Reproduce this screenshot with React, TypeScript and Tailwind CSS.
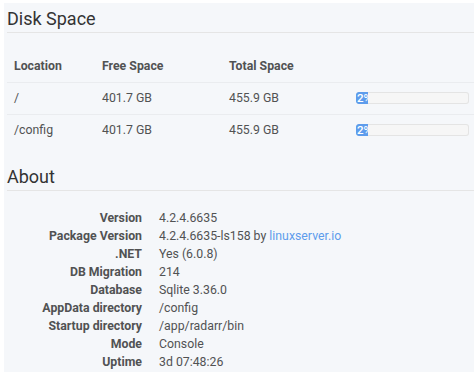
import React from "react";

type DiskRow = { location: string; free: string; total: string; percent: number };

const DISKS: DiskRow[] = [
  { location: "/", free: "401.7 GB", total: "455.9 GB", percent: 2 },
  { location: "/config", free: "401.7 GB", total: "455.9 GB", percent: 2 },
];

const ABOUT: { label: string; value: React.ReactNode }[] = [
  { label: "Version", value: "4.2.4.6635" },
  {
    label: "Package Version",
    value: (
      <>
        4.2.4.6635-ls158 by <span className="text-[#5d9cec]">linuxserver.io</span>
      </>
    ),
  },
  { label: ".NET", value: "Yes (6.0.8)" },
  { label: "DB Migration", value: "214" },
  { label: "Database", value: "Sqlite 3.36.0" },
  { label: "AppData directory", value: "/config" },
  { label: "Startup directory", value: "/app/radarr/bin" },
  { label: "Mode", value: "Console" },
  { label: "Uptime", value: "3d 07:48:26" },
];

function Legend({ children }: { children: React.ReactNode }) {
  return (
    <div className="border-b border-[#e5e5e5] pb-[1px] text-[18px] font-normal leading-[24px] text-[#333]">
      {children}
    </div>
  );
}

function Progress({ percent }: { percent: number }) {
  return (
    <div className="h-[12px] w-[113px] overflow-hidden rounded-[3px] bg-[#f6f6f6] shadow-[inset_0_0_0_1px_#e4e4e4]">
      <div
        className="h-full overflow-hidden whitespace-nowrap rounded-l-[2px] bg-[#5d9cec] pl-[1px] text-[11.5px] font-medium leading-[12px] text-white"
        style={{ width: `${Math.max(percent * 6, 12)}px` }}
      >
        {percent}%
      </div>
    </div>
  );
}

export default function App() {
  return (
    <div
      className="min-h-screen bg-white pl-[4px] pt-[3px] text-[12.3px] text-[#515253]"
      style={{ fontFamily: "Roboto, 'Liberation Sans', sans-serif" }}
    >
      <div className="h-[369px] bg-[#f5f7fa] pl-[3px] pt-[4px]">
        <Legend>Disk Space</Legend>

        <table className="mt-[17px] w-full table-fixed border-collapse">
          <thead>
            <tr className="h-[32px] text-left">
              <th className="w-[95px] pl-[7px] font-bold">Location</th>
              <th className="w-[127px] font-bold">Free Space</th>
              <th className="w-[127px] font-bold">Total Space</th>
              <th></th>
            </tr>
          </thead>
          <tbody>
            {DISKS.map((d) => (
              <tr key={d.location} className="h-[32px] border-t border-[#eaecef]">
                <td className="pl-[7px]">{d.location}</td>
                <td>{d.free}</td>
                <td>{d.total}</td>
                <td>
                  <Progress percent={d.percent} />
                </td>
              </tr>
            ))}
          </tbody>
        </table>

        <div className="mt-[19px]">
          <Legend>About</Legend>
        </div>

        <dl className="mt-[18px] grid grid-cols-[135px_1fr] gap-x-[17px] leading-[18px]">
          {ABOUT.map((row) => (
            <React.Fragment key={row.label}>
              <dt className="text-right font-bold">{row.label}</dt>
              <dd>{row.value}</dd>
            </React.Fragment>
          ))}
        </dl>
      </div>
    </div>
  );
}
